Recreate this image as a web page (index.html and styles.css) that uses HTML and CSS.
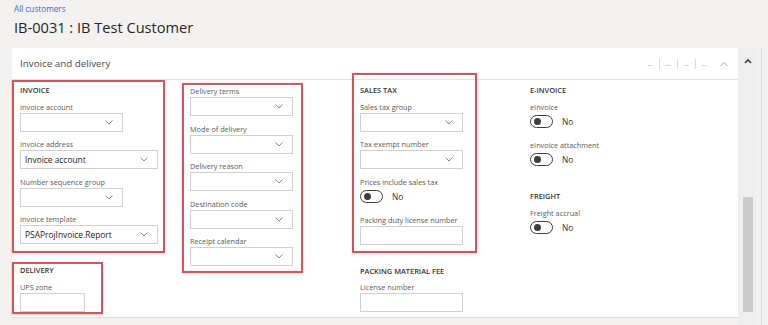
FILE: index.html
```html
<!DOCTYPE html>
<html lang="en">
<head>
<meta charset="utf-8">
<title>IB-0031 : IB Test Customer</title>
<link rel="stylesheet" href="styles.css">
</head>
<body>
<div class="top">
  <a class="crumb" href="#">All customers</a>
  <h1 class="title">IB-0031 : IB Test Customer</h1>
</div>
<div class="main">
  <section class="card">
    <header class="card-head">
      <span class="card-title">Invoice and delivery</span>
      <div class="head-tools">
        <span class="dash">--</span><span class="sep"></span>
        <span class="dash">--</span><span class="sep"></span>
        <span class="dash">--</span><span class="sep"></span>
        <span class="dash">--</span>
        <svg class="collapse" width="8" height="6" viewBox="0 0 8 6"><polyline points="0.5,5 4,1.5 7.5,5" fill="none" stroke="#a8a8a8" stroke-width="1"/></svg>
      </div>
    </header>
    <div class="card-body">
      <div class="col col1">
        <div class="box box-invoice">
          <div class="heading">INVOICE</div>
          <div class="field">
            <div class="label">Invoice account</div>
            <div class="input short"><span class="value"></span><svg class="chev" width="8" height="5" viewBox="0 0 8 5"><polyline points="0.5,0.5 4,4 7.5,0.5" fill="none" stroke="#8a8a8a" stroke-width="1"/></svg></div>
          </div>
          <div class="field">
            <div class="label">Invoice address</div>
            <div class="input wide"><span class="value">Invoice account</span><svg class="chev" width="8" height="5" viewBox="0 0 8 5"><polyline points="0.5,0.5 4,4 7.5,0.5" fill="none" stroke="#8a8a8a" stroke-width="1"/></svg></div>
          </div>
          <div class="field">
            <div class="label">Number sequence group</div>
            <div class="input short"><span class="value"></span><svg class="chev" width="8" height="5" viewBox="0 0 8 5"><polyline points="0.5,0.5 4,4 7.5,0.5" fill="none" stroke="#8a8a8a" stroke-width="1"/></svg></div>
          </div>
          <div class="field">
            <div class="label">Invoice template</div>
            <div class="input wide"><span class="value">PSAProjInvoice.Report</span><svg class="chev" width="8" height="5" viewBox="0 0 8 5"><polyline points="0.5,0.5 4,4 7.5,0.5" fill="none" stroke="#8a8a8a" stroke-width="1"/></svg></div>
          </div>
        </div>
        <div class="box box-delivery">
          <div class="heading">DELIVERY</div>
          <div class="field">
            <div class="label">UPS zone</div>
            <div class="input tiny"></div>
          </div>
        </div>
      </div>

      <div class="col col2">
        <div class="box box-terms">
          <div class="field">
            <div class="label">Delivery terms</div>
            <div class="input short"><span class="value"></span><svg class="chev" width="8" height="5" viewBox="0 0 8 5"><polyline points="0.5,0.5 4,4 7.5,0.5" fill="none" stroke="#8a8a8a" stroke-width="1"/></svg></div>
          </div>
          <div class="field">
            <div class="label">Mode of delivery</div>
            <div class="input short"><span class="value"></span><svg class="chev" width="8" height="5" viewBox="0 0 8 5"><polyline points="0.5,0.5 4,4 7.5,0.5" fill="none" stroke="#8a8a8a" stroke-width="1"/></svg></div>
          </div>
          <div class="field">
            <div class="label">Delivery reason</div>
            <div class="input short"><span class="value"></span><svg class="chev" width="8" height="5" viewBox="0 0 8 5"><polyline points="0.5,0.5 4,4 7.5,0.5" fill="none" stroke="#8a8a8a" stroke-width="1"/></svg></div>
          </div>
          <div class="field">
            <div class="label">Destination code</div>
            <div class="input short"><span class="value"></span><svg class="chev" width="8" height="5" viewBox="0 0 8 5"><polyline points="0.5,0.5 4,4 7.5,0.5" fill="none" stroke="#8a8a8a" stroke-width="1"/></svg></div>
          </div>
          <div class="field">
            <div class="label">Receipt calendar</div>
            <div class="input short"><span class="value"></span><svg class="chev" width="8" height="5" viewBox="0 0 8 5"><polyline points="0.5,0.5 4,4 7.5,0.5" fill="none" stroke="#8a8a8a" stroke-width="1"/></svg></div>
          </div>
        </div>
      </div>

      <div class="col col3">
        <div class="box box-tax">
          <div class="heading">SALES TAX</div>
          <div class="field">
            <div class="label">Sales tax group</div>
            <div class="input short"><span class="value"></span><svg class="chev" width="8" height="5" viewBox="0 0 8 5"><polyline points="0.5,0.5 4,4 7.5,0.5" fill="none" stroke="#8a8a8a" stroke-width="1"/></svg></div>
          </div>
          <div class="field">
            <div class="label">Tax exempt number</div>
            <div class="input short"><span class="value"></span><svg class="chev" width="8" height="5" viewBox="0 0 8 5"><polyline points="0.5,0.5 4,4 7.5,0.5" fill="none" stroke="#8a8a8a" stroke-width="1"/></svg></div>
          </div>
          <div class="field field-toggle">
            <div class="label">Prices include sales tax</div>
            <div class="toggle-row"><span class="toggle"><span class="knob"></span></span><span class="toggle-text">No</span></div>
          </div>
          <div class="field">
            <div class="label">Packing duty license number</div>
            <div class="input short"></div>
          </div>
        </div>
        <div class="plain-group packing">
          <div class="heading">PACKING MATERIAL FEE</div>
          <div class="field">
            <div class="label">License number</div>
            <div class="input short"></div>
          </div>
        </div>
      </div>

      <div class="col col4">
        <div class="plain-group">
          <div class="heading">E-INVOICE</div>
          <div class="field field-toggle">
            <div class="label">eInvoice</div>
            <div class="toggle-row"><span class="toggle"><span class="knob"></span></span><span class="toggle-text">No</span></div>
          </div>
          <div class="field field-toggle">
            <div class="label">eInvoice attachment</div>
            <div class="toggle-row"><span class="toggle"><span class="knob"></span></span><span class="toggle-text">No</span></div>
          </div>
        </div>
        <div class="plain-group freight">
          <div class="heading">FREIGHT</div>
          <div class="field field-toggle">
            <div class="label">Freight accrual</div>
            <div class="toggle-row"><span class="toggle"><span class="knob"></span></span><span class="toggle-text">No</span></div>
          </div>
        </div>
      </div>
    </div>
  </section>
  <div class="scrollbar">
    <svg class="scroll-up" width="8" height="6" viewBox="0 0 8 6"><polyline points="1,5 4,2 7,5" fill="none" stroke="#444" stroke-width="1.6"/></svg>
    <div class="thumb"></div>
  </div>
  <div class="edge"></div>
</div>
</body>
</html>
```
FILE: styles.css
```css
* { box-sizing: border-box; }

html, body {
  margin: 0;
  padding: 0;
  height: 325px;
  overflow: hidden;
}

body {
  background: #f4f2f0;
  font-family: "Open Sans", "Noto Sans", sans-serif;
  color: #333;
}

.top {
  padding-left: 14px;
  padding-top: 2px;
  height: 48px;
}

.crumb {
  display: block;
  font-size: 8.2px;
  line-height: 13px;
  color: #3b6fc2;
  text-decoration: none;
}

.title {
  margin: 2px 0 0 0;
  font-size: 14.6px;
  line-height: 20px;
  font-weight: 400;
  color: #262626;
}

.main {
  display: flex;
  align-items: flex-start;
}

.card {
  margin-left: 12px;
  width: 726px;
  height: 269px;
  background: #fff;
  box-shadow: 0 1px 1px rgba(0,0,0,0.08);
}

.card-head {
  height: 32px;
  border-bottom: 1px solid #e3e3e3;
  display: flex;
  align-items: center;
  padding-left: 8px;
  padding-right: 10px;
  padding-bottom: 1px;
}

.card-title {
  font-size: 9.8px;
  color: #4a4a4a;
  flex: 1;
}

.head-tools {
  display: flex;
  align-items: center;
  gap: 6px;
  padding-top: 2px;
}

.dash {
  font-size: 8px;
  line-height: 10px;
  color: #a8a8a8;
}

.sep {
  width: 1px;
  height: 10px;
  background: #dcdcdc;
}

.collapse {
  margin-left: 7px;
}

.card-body {
  display: flex;
  align-items: flex-start;
}

.col { display: flex; flex-direction: column; }

.col1 { width: 153px; }
.col2 { width: 121px; margin-left: 17px; margin-top: 3px; }
.col3 { width: 125px; margin-left: 49px; margin-top: -7px; }
.col4 { margin-left: 45px; padding-top: 4px; padding-left: 8px; }

.box {
  border: 2px solid #d6555a;
  box-shadow: 0 1px 2px rgba(120,40,40,0.25);
  padding-left: 6px;
}

.box-invoice { padding-top: 2px; padding-bottom: 7px; }
.box-delivery { width: 91px; margin-top: 9px; padding-bottom: 0; }
.box-terms { padding-top: 0; padding-bottom: 5px; }
.box-tax { padding-top: 9px; padding-bottom: 6px; }

.plain-group { display: flex; flex-direction: column; }
.packing { margin-top: 11.5px; padding-left: 8px; }
.freight { margin-top: 24px; }

.heading {
  font-size: 7.4px;
  line-height: 12px;
  font-weight: 600;
  color: #333;
  margin-bottom: 4.5px;
}

.field { margin-bottom: 6.5px; }
.field:last-child { margin-bottom: 0; }
.field-toggle { margin-bottom: 11.5px; }
.field-toggle:last-child { margin-bottom: 0; }

.label {
  font-size: 7.3px;
  line-height: 12px;
  color: #5a5a5a;
  white-space: nowrap;
}

.input {
  height: 19px;
  border: 1px solid #d0d0d0;
  background: #fff;
  display: flex;
  align-items: center;
  padding-left: 4px;
  padding-right: 9px;
}

.input.short { width: 103px; }
.input.wide { width: 138px; }
.input.tiny { width: 65px; }

.value {
  flex: 1;
  font-size: 8.4px;
  color: #222;
  white-space: nowrap;
}

.chev { flex: none; }

.toggle-row {
  display: flex;
  align-items: center;
  margin-top: 2px;
  height: 13px;
}

.toggle {
  width: 23px;
  height: 13px;
  border: 1px solid #3c3c3c;
  border-radius: 7px;
  display: flex;
  align-items: center;
  padding-left: 3px;
}

.knob {
  width: 7px;
  height: 7px;
  border-radius: 50%;
  background: #3c3c3c;
}

.toggle-text {
  margin-left: 9px;
  font-size: 8.4px;
  color: #333;
}

.scrollbar {
  width: 17px;
  height: 277px;
  background: #eeeeee;
  margin-left: 1px;
  display: flex;
  flex-direction: column;
  align-items: center;
}

.scroll-up { margin-top: 10px; }

.thumb {
  width: 10px;
  height: 115px;
  background: #cbcbcb;
  margin-top: 133px;
}

.edge {
  width: 1px;
  height: 277px;
  margin-left: 5px;
  background: #dedbd8;
}
```
